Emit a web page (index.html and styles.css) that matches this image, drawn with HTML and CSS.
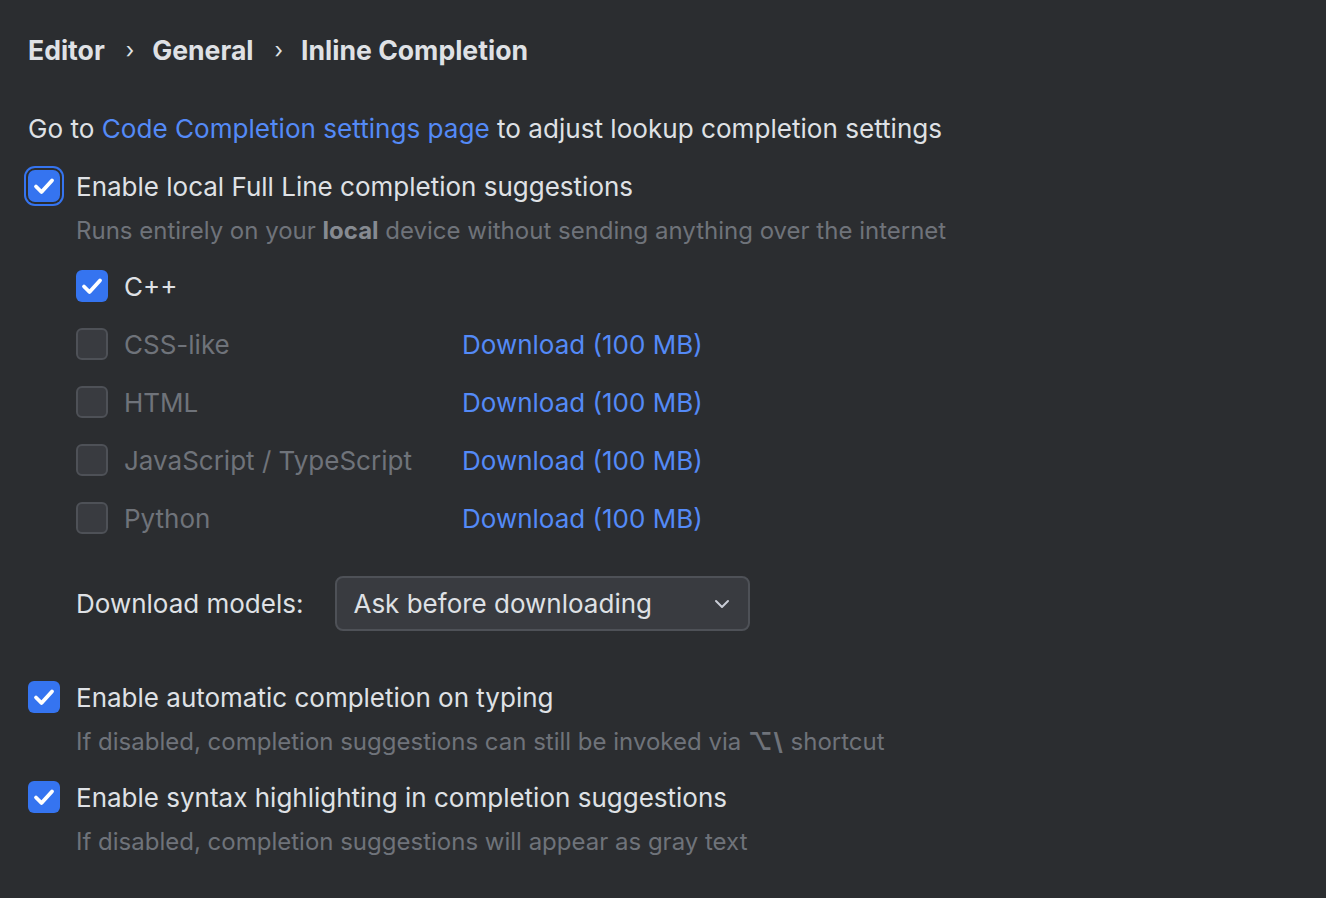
FILE: index.html
```html
<!DOCTYPE html>
<html>
<head>
<meta charset="utf-8">
<link rel="stylesheet" href="styles.css">
</head>
<body>
<div class="page">
  <div class="crumbs">
    <span>Editor</span><span class="sep">›</span><span>General</span><span class="sep">›</span><span>Inline Completion</span>
  </div>

  <div class="intro">Go to <a class="link">Code Completion settings page</a> to adjust lookup completion settings</div>

  <div class="opt first">
    <span class="cb on focus"><svg viewBox="0 0 32 32"><path d="M8 16.5l5.5 5.5 10.5-11.5" /></svg></span>
    <span class="label">Enable local Full Line completion suggestions</span>
  </div>
  <div class="desc">Runs entirely on your <b>local</b> device without sending anything over the internet</div>

  <div class="langs">
    <div class="lang">
      <span class="cb on"><svg viewBox="0 0 32 32"><path d="M8 16.5l5.5 5.5 10.5-11.5" /></svg></span>
      <span class="label">C++</span>
    </div>
    <div class="lang">
      <span class="cb"></span>
      <span class="label dim">CSS-like</span>
      <a class="link">Download (100 MB)</a>
    </div>
    <div class="lang">
      <span class="cb"></span>
      <span class="label dim">HTML</span>
      <a class="link">Download (100 MB)</a>
    </div>
    <div class="lang">
      <span class="cb"></span>
      <span class="label dim">JavaScript / TypeScript</span>
      <a class="link">Download (100 MB)</a>
    </div>
    <div class="lang">
      <span class="cb"></span>
      <span class="label dim">Python</span>
      <a class="link">Download (100 MB)</a>
    </div>

    <div class="models">
      <span class="label">Download models:</span>
      <div class="select">
        <span>Ask before downloading</span>
        <svg class="chev" viewBox="0 0 16 10"><path d="M2 2l6 6 6-6" /></svg>
      </div>
    </div>
  </div>

  <div class="opt second">
    <span class="cb on"><svg viewBox="0 0 32 32"><path d="M8 16.5l5.5 5.5 10.5-11.5" /></svg></span>
    <span class="label">Enable automatic completion on typing</span>
  </div>
  <div class="desc">If disabled, completion suggestions can still be invoked via <span class="keys">⌥\</span> shortcut</div>

  <div class="opt third">
    <span class="cb on"><svg viewBox="0 0 32 32"><path d="M8 16.5l5.5 5.5 10.5-11.5" /></svg></span>
    <span class="label">Enable syntax highlighting in completion suggestions</span>
  </div>
  <div class="desc">If disabled, completion suggestions will appear as gray text</div>
</div>
</body>
</html>
```

FILE: styles.css
```css
html, body {
  margin: 0;
  padding: 0;
  background: #2b2d30;
}
body {
  width: 1326px;
  height: 898px;
  overflow: hidden;
  font-family: Inter, "Noto Sans", sans-serif;
  font-size: 26px;
  color: #dfe1e5;
}
.page {
  padding: 30px 0 0 28px;
}
.crumbs {
  display: flex;
  align-items: center;
  font-weight: 700;
  font-size: 26.6px;
  height: 40px;
  color: #dfe1e5;
}
.crumbs .sep {
  font-weight: 400;
  font-size: 22px;
  margin: 0 18px 0 21px;
  color: #dfe1e5;
}
.intro {
  margin-top: 39px;
  height: 40px;
  line-height: 40px;
  font-size: 26.1px;
}
.link {
  color: #548af7;
  text-decoration: none;
}
.opt {
  display: flex;
  align-items: center;
  height: 40px;
}
.opt.first { margin-top: 17px; margin-left: 0; }
.opt .label { margin-left: 16px; }
.cb {
  box-sizing: border-box;
  width: 32px;
  height: 32px;
  flex: none;
  border-radius: 6px;
  border: 2px solid #4e5157;
  background: #393b40;
  display: inline-flex;
  align-items: center;
  justify-content: center;
}
.cb.on {
  border: none;
  background: #3574f0;
}
.cb.focus {
  box-shadow: 0 0 0 2px #2b2d30, 0 0 0 4px #3574f0;
  border-radius: 7px;
}
.cb svg {
  width: 32px;
  height: 32px;
}
.cb svg path {
  fill: none;
  stroke: #ffffff;
  stroke-width: 3.8;
  stroke-linecap: round;
  stroke-linejoin: round;
}
.desc {
  margin-left: 48px;
  margin-top: 5px;
  height: 40px;
  line-height: 40px;
  font-size: 24px;
  color: #6f737a;
}
.desc b {
  font-weight: 700;
  color: #868a91;
}
.keys {
  font-weight: 700;
  letter-spacing: 1px;
}
.langs {
  margin-left: 48px;
  margin-top: 15px;
  display: flex;
  flex-direction: column;
  gap: 18px;
}
.lang {
  display: flex;
  align-items: center;
  height: 40px;
}
.lang .label {
  margin-left: 16px;
  width: 338px;
}
.label.dim { color: #6f737a; }
.models {
  display: flex;
  align-items: center;
  margin-top: 20px;
}
.select {
  box-sizing: border-box;
  margin-left: 32px;
  width: 415px;
  height: 55px;
  border: 2px solid #4e5157;
  border-radius: 8px;
  background: #393b40;
  display: flex;
  align-items: center;
  justify-content: space-between;
  padding: 0 18px 0 16px;
}
.chev {
  width: 16px;
  height: 10px;
}
.chev path {
  fill: none;
  stroke: #c9ccd6;
  stroke-width: 2;
  stroke-linecap: round;
  stroke-linejoin: round;
}
.opt.second { margin-top: 46px; }
.opt.third { margin-top: 15px; }
```
